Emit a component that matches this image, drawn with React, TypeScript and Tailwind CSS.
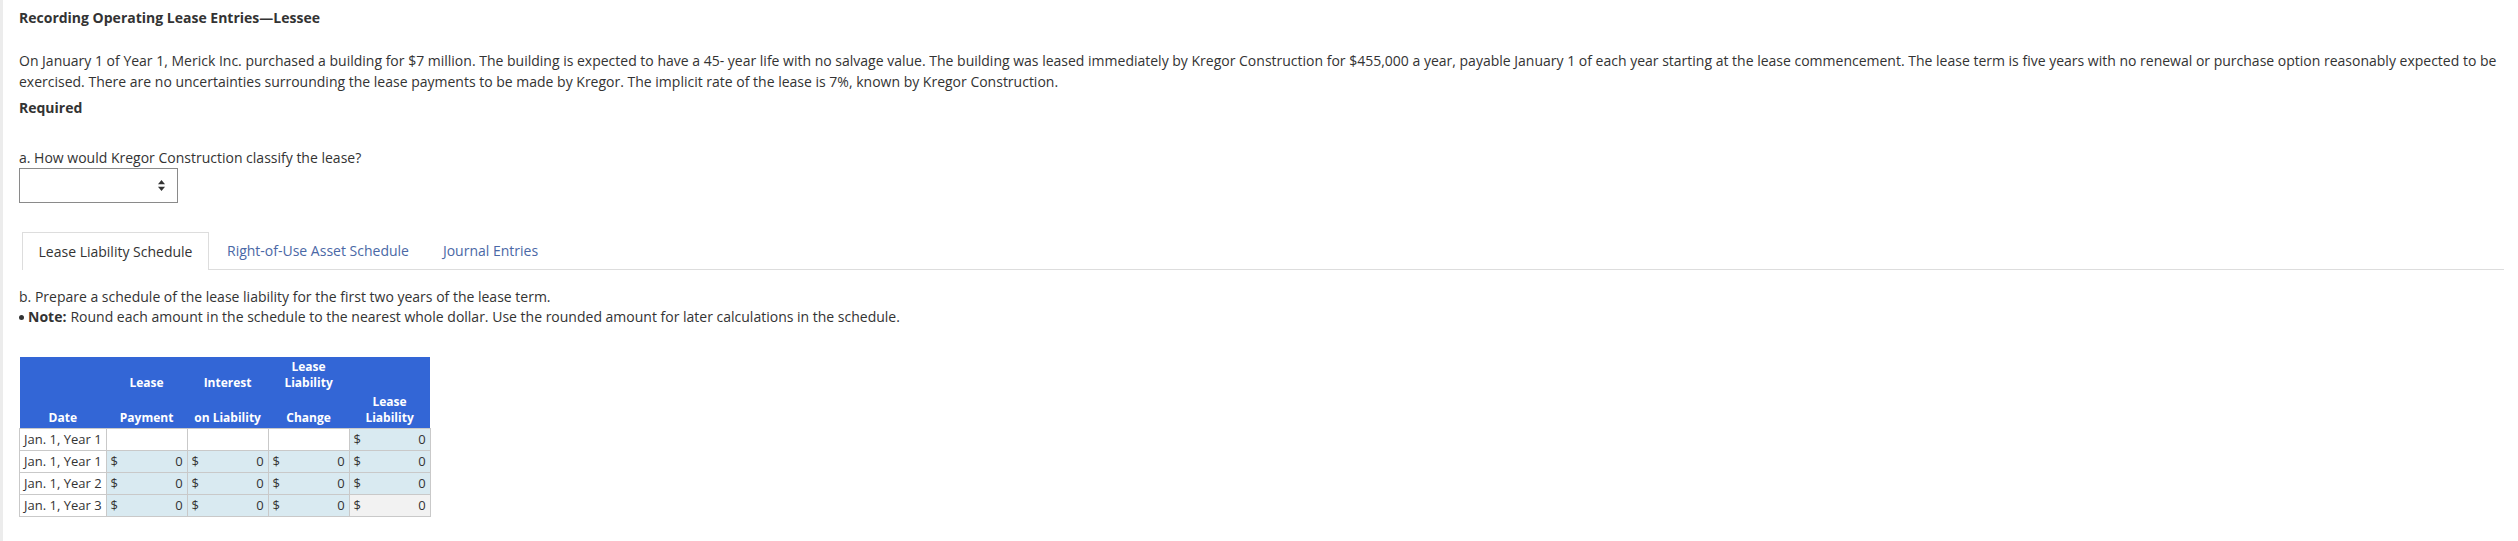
import React from 'react'

const rows = [
  { date: 'Jan. 1, Year 1', first: true },
  { date: 'Jan. 1, Year 1' },
  { date: 'Jan. 1, Year 2' },
  { date: 'Jan. 1, Year 3', last: true },
]

function Money({ gray }: { gray?: boolean }) {
  return (
    <td className={`h-[22px] border border-[#c9c9c9] px-[4px] ${gray ? 'bg-[#f2f2f2]' : 'bg-[#d9eaf1]'}`}>
      <div className="flex justify-between">
        <span>$</span>
        <span>0</span>
      </div>
    </td>
  )
}

function Blank() {
  return <td className="h-[22px] border border-[#c9c9c9] bg-white" />
}

export default function App() {
  return (
    <div
      className="min-h-[541px] border-l-[3px] border-[#ececec] bg-white text-[14px] leading-[20px] text-[#333]"
      style={{ fontFamily: '"Open Sans", "Liberation Sans", sans-serif' }}
    >
      <div className="pl-[16px] pr-[14px] pt-[8px]">
        <h1 className="text-[14px] font-bold leading-[20px]">Recording Operating Lease Entries—Lessee</h1>

        <p className="mt-[22px] leading-[21px]">
          On January 1 of Year 1, Merick Inc. purchased a building for $7 million. The building is expected to have a 45- year life with no
          salvage value. The building was leased immediately by Kregor Construction for $455,000 a year, payable January 1 of each year
          starting at the lease commencement. The lease term is five years with no renewal or purchase option reasonably expected to be
          exercised. There are no uncertainties surrounding the lease payments to be made by Kregor. The implicit rate of the lease is 7%,
          known by Kregor Construction.
        </p>
        <div className="mt-[6px] font-bold">Required</div>

        <div className="mt-[30px]">a. How would Kregor Construction classify the lease?</div>
        <div className="flex h-[35px] w-[159px] items-center justify-end border border-[#8a8a8a] pr-[12px]">
          <svg width="7" height="11" viewBox="0 0 7 11">
            <path d="M3.5 0 L7 4.2 H0 Z" fill="#333" />
            <path d="M3.5 11 L7 6.8 H0 Z" fill="#333" />
          </svg>
        </div>

        <div className="mt-[29px] ml-[3px] flex h-[38px] items-stretch border-b border-[#dddddd]">
          <div className="-mb-px flex w-[187px] items-center justify-center border border-b-0 border-[#dddddd] bg-white">
            Lease Liability Schedule
          </div>
          <div className="flex items-center pl-[18px] text-[#4a68a6]">Right-of-Use Asset Schedule</div>
          <div className="flex items-center pl-[34px] text-[#4a68a6]">Journal Entries</div>
        </div>

        <div className="mt-[17px]">b. Prepare a schedule of the lease liability for the first two years of the lease term.</div>
        <div className="flex items-center">
          <span className="mr-[4px] inline-block h-[5px] w-[5px] rounded-full bg-[#333]" />
          <span className="font-bold">Note:</span>
          <span className="ml-[4px]">Round each amount in the schedule to the nearest whole dollar. Use the rounded amount for later calculations in the schedule.</span>
        </div>

        <table className="mt-[30px] border-collapse text-[13px] leading-[16px]">
          <colgroup>
            <col className="w-[84px]" />
            <col className="w-[81px]" />
            <col className="w-[81px]" />
            <col className="w-[81px]" />
            <col className="w-[81px]" />
          </colgroup>
          <thead className="bg-[#3366d6] text-[12px] font-bold text-white">
            <tr className="h-[34px]">
              <th rowSpan={2} className="px-[4px] pb-[2px] align-bottom">Date</th>
              <th className="px-[4px] align-bottom">Lease</th>
              <th className="px-[4px] align-bottom">Interest</th>
              <th className="px-[4px] align-bottom">
                Lease
                <br />
                Liability
              </th>
              <th rowSpan={2} className="px-[4px] pb-[2px] align-bottom">
                Lease
                <br />
                Liability
              </th>
            </tr>
            <tr className="h-[37px]">
              <th className="px-[4px] pb-[2px] align-bottom">Payment</th>
              <th className="px-[2px] pb-[2px] align-bottom whitespace-nowrap">on Liability</th>
              <th className="px-[4px] pb-[2px] align-bottom">Change</th>
            </tr>
          </thead>
          <tbody>
            {rows.map((r, i) => (
              <tr key={i}>
                <td className="h-[22px] border border-[#c9c9c9] bg-white px-[4px] whitespace-nowrap">{r.date}</td>
                {r.first ? (
                  <>
                    <Blank />
                    <Blank />
                    <Blank />
                  </>
                ) : (
                  <>
                    <Money />
                    <Money />
                    <Money />
                  </>
                )}
                <Money gray={r.last} />
              </tr>
            ))}
          </tbody>
        </table>
      </div>
    </div>
  )
}
